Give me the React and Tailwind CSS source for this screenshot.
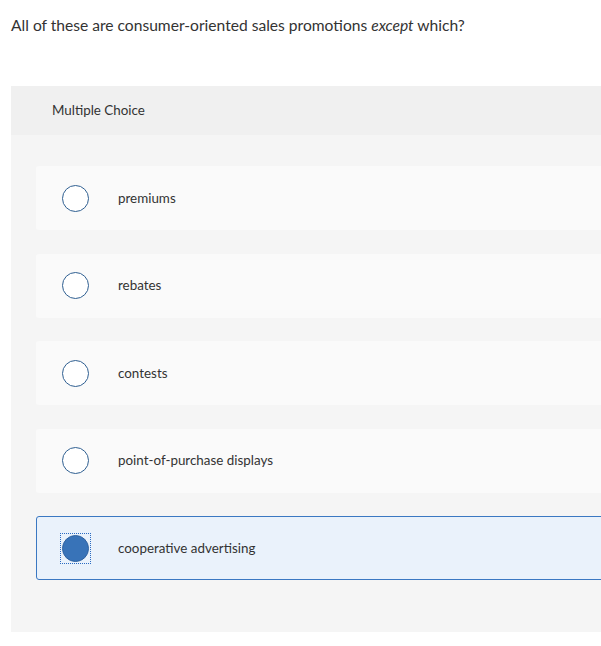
const options = [
  { id: 'a', label: 'premiums' },
  { id: 'b', label: 'rebates' },
  { id: 'c', label: 'contests' },
  { id: 'd', label: 'point-of-purchase displays' },
  { id: 'e', label: 'cooperative advertising' },
];

export default function App() {
  const selected = 'e';

  return (
    <div className="min-h-[646px] bg-white pt-[15px] pl-[11px] text-[#333]" style={{ fontFamily: 'Lato, "Open Sans", sans-serif' }}>
      {/* Question */}
      <p className="text-[15.6px] leading-[20px] text-[#333]">
        All of these are consumer-oriented sales promotions <em>except</em> which?
      </p>

      {/* Answer panel */}
      <div className="mt-[51px] bg-[#f5f5f5] w-[calc(100%+20px)]">
        <div className="h-[49px] bg-[#f0f0f0] flex items-center pl-[41px] text-[13.4px] text-[#333]">
          Multiple Choice
        </div>

        <div className="pt-[31px] pb-[52px] pl-[25px] flex flex-col gap-[23.5px]">
          {options.map((opt) => {
            const isSel = opt.id === selected;
            return (
              <div
                key={opt.id}
                className={`h-[64px] flex items-center pl-[25px] rounded-[3px] ${
                  isSel ? 'bg-[#eaf2fb] border border-[#3b78c2]' : 'bg-[#fafafa] border border-transparent'
                }`}
              >
                {isSel ? (
                  <span className="w-[29px] h-[29px] -ml-[1px] outline outline-1 outline-dotted outline-[#2a6bc2] flex items-center justify-center">
                    <span className="w-[27px] h-[27px] rounded-full bg-[#3873b8] border border-[#2f62a0]" />
                  </span>
                ) : (
                  <span className="w-[27px] h-[27px] rounded-full bg-white border-[1.5px] border-[#2f5f91]" />
                )}
                <span className={`text-[13.4px] text-[#333] ${isSel ? 'ml-[28px]' : 'ml-[29px]'}`}>{opt.label}</span>
              </div>
            );
          })}
        </div>
      </div>
    </div>
  );
}
